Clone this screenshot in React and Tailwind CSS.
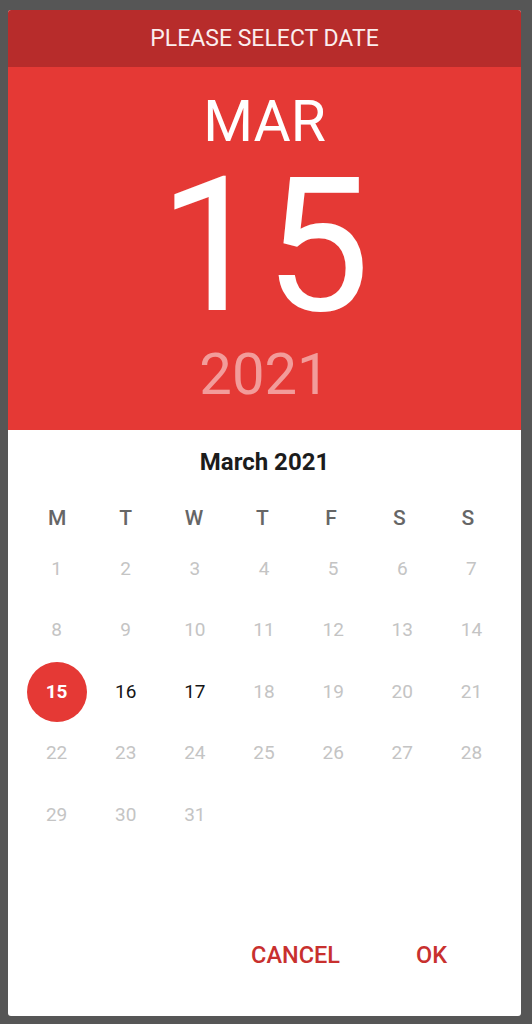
import React from "react";

const weekdays = ["M", "T", "W", "T", "F", "S", "S"];

export default function App() {
  const days = Array.from({ length: 31 }, (_, i) => i + 1);
  return (
    <div
      className="w-[532px] h-[1024px] bg-[#565656] pt-[10px] pl-[8px]"
      style={{ fontFamily: "Roboto, 'Noto Sans', sans-serif" }}
    >
      <div className="w-[513px] h-[1006px] bg-white rounded-[3px] overflow-hidden flex flex-col">
        <div className="h-[57px] bg-[#b72c2b] flex items-center justify-center text-[23px] text-[#fbeeee] leading-none">
          PLEASE SELECT DATE
        </div>
        <div className="h-[363px] bg-[#e53935] flex flex-col items-center pt-[26px] text-white">
          <div className="text-[57px] leading-none">MAR</div>
          <div className="text-[188px] leading-[150px] mt-[21px]">15</div>
          <div className="text-[58px] leading-none mt-[24px] text-white/50">2021</div>
        </div>
        <div className="pt-[20px] text-center text-[24px] font-bold leading-none text-[#1c1c1c]">
          March 2021
        </div>
        <div className="ml-[15px] w-[479px] mt-[26px] grid grid-cols-7">
          {weekdays.map((d, i) => (
            <div
              key={i}
              className="h-[38px] flex items-center justify-center text-[21px] font-medium text-[#666666]"
            >
              {d}
            </div>
          ))}
        </div>
        <div className="ml-[14px] w-[484px] grid grid-cols-7">
          {days.map((d) => (
            <div key={d} className="h-[61.5px] flex items-center justify-center">
              {d === 15 ? (
                <div className="w-[60px] h-[60px] rounded-full bg-[#e53935] flex items-center justify-center text-[19px] font-bold text-white">
                  15
                </div>
              ) : (
                <span
                  className={
                    d === 16 || d === 17
                      ? "text-[19px] text-[#151515]"
                      : "text-[19px] text-[#c4c4c4]"
                  }
                >
                  {d}
                </span>
              )}
            </div>
          ))}
        </div>
        <div className="mt-auto h-[120px] flex items-center justify-end pr-[74px] gap-[76px] text-[23.5px] font-medium text-[#c8302e]">
          <span>CANCEL</span>
          <span>OK</span>
        </div>
      </div>
    </div>
  );
}
